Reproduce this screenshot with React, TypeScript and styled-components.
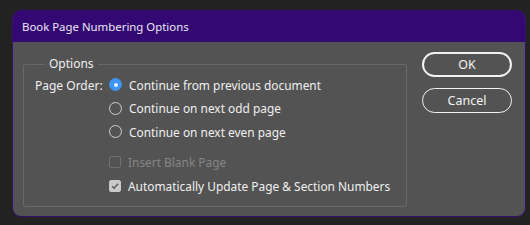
import React from "react";
import styled, { createGlobalStyle } from "styled-components";

const GlobalStyle = createGlobalStyle`
  html, body {
    margin: 0;
    padding: 0;
    background: #222222;
  }
  body {
    font-family: "Noto Sans", "Open Sans", sans-serif;
    color: #f0f0f0;
  }
`;

const Page = styled.div`
  width: 530px;
  height: 225px;
  padding: 10px 0 0 12px;
  box-sizing: border-box;
`;

const Window = styled.div`
  width: 514px;
  height: 207px;
  box-sizing: border-box;
  border: 1px solid #34106f;
  border-top: none;
  border-radius: 9px;
  overflow: hidden;
  background: #535353;
  display: flex;
  flex-direction: column;
`;

const TitleBar = styled.div`
  height: 32px;
  flex: none;
  background: #330872;
  display: flex;
  align-items: center;
  padding-left: 9px;
  font-size: 11.4px;
  color: #ece8f4;
`;

const Body = styled.div`
  flex: 1;
  display: flex;
  align-items: flex-start;
  padding: 10px 0 0 10px;
`;

const Group = styled.fieldset`
  width: 384px;
  height: 151px;
  box-sizing: border-box;
  margin: 4px 0 0 0;
  padding: 1px 11px 0 11px;
  border: 1px solid #686868;
  border-radius: 2px;
  min-inline-size: 0;
`;

const Legend = styled.legend`
  font-size: 12px;
  line-height: 16px;
  padding: 0 4px;
  margin-left: 10px;
`;

const OrderGrid = styled.div`
  display: grid;
  grid-template-columns: 74px 1fr;
`;

const FieldLabel = styled.div`
  font-size: 12px;
  height: 24px;
  display: flex;
  align-items: center;
`;

const Options = styled.div`
  display: flex;
  flex-direction: column;
`;

const OptionRow = styled.div<{ $disabled?: boolean }>`
  height: 23.5px;
  display: flex;
  align-items: center;
  gap: 7px;
  font-size: 11.9px;
  color: ${(p) => (p.$disabled ? "#858585" : "#f0f0f0")};
`;

const Checks = styled.div`
  margin: 7px 0 0 74px;
  display: flex;
  flex-direction: column;
`;

const Radio = styled.span<{ $checked?: boolean }>`
  width: 13px;
  height: 13px;
  box-sizing: border-box;
  border-radius: 50%;
  border: 1.5px solid ${(p) => (p.$checked ? "#3f95f2" : "#cfcfcf")};
  background: ${(p) => (p.$checked ? "#3f95f2" : "transparent")};
  display: flex;
  align-items: center;
  justify-content: center;
  &::after {
    content: "";
    display: ${(p) => (p.$checked ? "block" : "none")};
    width: 4px;
    height: 4px;
    border-radius: 50%;
    background: #e6f0fc;
  }
`;

const Check = styled.span<{ $checked?: boolean }>`
  width: 12px;
  height: 12px;
  box-sizing: border-box;
  border-radius: 2px;
  border: 1px solid ${(p) => (p.$checked ? "#c9c9c9" : "#6f6f6f")};
  background: ${(p) => (p.$checked ? "#c9c9c9" : "transparent")};
  display: flex;
  align-items: center;
  justify-content: center;
`;

const Buttons = styled.div`
  margin-left: 15px;
  display: flex;
  flex-direction: column;
  gap: 11px;
`;

const Button = styled.button<{ $primary?: boolean }>`
  width: 90px;
  height: 25px;
  box-sizing: border-box;
  border-radius: 13px;
  border: ${(p) => (p.$primary ? "2px" : "1px")} solid #f2f2f2;
  background: transparent;
  color: #f4f4f4;
  font-family: "Noto Sans", "Open Sans", sans-serif;
  font-size: 12.5px;
  padding: 0;
`;

const CheckMark = () => (
  <svg width="8" height="8" viewBox="0 0 8 8">
    <path d="M1 4.2 L3.1 6.2 L7 1.8" fill="none" stroke="#5a5a5a" strokeWidth="1.5" />
  </svg>
);

export default function App() {
  return (
    <Page>
      <GlobalStyle />
      <Window>
        <TitleBar>Book Page Numbering Options</TitleBar>
        <Body>
          <Group>
            <Legend>Options</Legend>
            <OrderGrid>
              <FieldLabel>Page Order:</FieldLabel>
              <Options>
                <OptionRow>
                  <Radio $checked />
                  Continue from previous document
                </OptionRow>
                <OptionRow>
                  <Radio />
                  Continue on next odd page
                </OptionRow>
                <OptionRow>
                  <Radio />
                  Continue on next even page
                </OptionRow>
              </Options>
            </OrderGrid>
            <Checks>
              <OptionRow $disabled>
                <Check />
                Insert Blank Page
              </OptionRow>
              <OptionRow>
                <Check $checked>
                  <CheckMark />
                </Check>
                Automatically Update Page &amp; Section Numbers
              </OptionRow>
            </Checks>
          </Group>
          <Buttons>
            <Button $primary>OK</Button>
            <Button>Cancel</Button>
          </Buttons>
        </Body>
      </Window>
    </Page>
  );
}
